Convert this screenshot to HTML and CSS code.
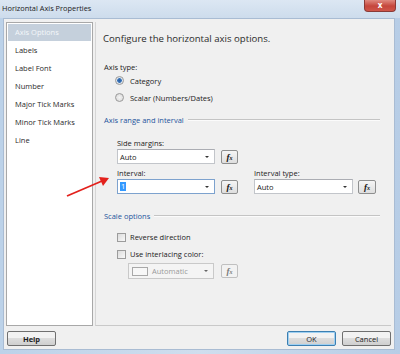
FILE: index.html
```html
<!DOCTYPE html>
<html lang="en">
  <head>
    <meta charset="UTF-8" />
    <title>Horizontal Axis Properties</title>
    <link rel="stylesheet" href="styles.css">
  </head>
  <body>
    <div class="window">
      <div class="titlebar">
        <span class="title">Horizontal Axis Properties</span>
        <span class="close">x</span>
      </div>
      <div class="content">
        <div class="main">
          <ul class="nav">
            <li class="active">Axis Options</li>
            <li>Labels</li>
            <li>Label Font</li>
            <li>Number</li>
            <li>Major Tick Marks</li>
            <li>Minor Tick Marks</li>
            <li>Line</li>
          </ul>
          <div class="panel">
            <div class="heading">Configure the horizontal axis options.</div>
            <div class="label">Axis type:</div>
            <div class="option first"><span class="radio checked"></span>Category</div>
            <div class="option"><span class="radio"></span>Scalar (Numbers/Dates)</div>

            <div class="section"><span>Axis range and interval</span></div>
            <div class="fields">
              <div class="field-label top">Side margins:</div>
              <div class="field-row">
                <div class="select"><span>Auto</span><span class="caret"></span></div>
                <span class="fx"><b>f</b><small>x</small></span>
              </div>
              <div class="pair">
                <div class="group">
                  <div class="field-label">Interval:</div>
                  <div class="field-row">
                    <div class="select focused"><span class="picked">1</span><span class="caret"></span></div>
                    <span class="fx"><b>f</b><small>x</small></span>
                  </div>
                </div>
                <div class="group second">
                  <div class="field-label">Interval type:</div>
                  <div class="field-row">
                    <div class="select wide"><span>Auto</span><span class="caret"></span></div>
                    <span class="fx"><b>f</b><small>x</small></span>
                  </div>
                </div>
              </div>
            </div>

            <div class="section scale"><span>Scale options</span></div>
            <div class="fields">
              <div class="check first"><span class="box"></span>Reverse direction</div>
              <div class="check"><span class="box"></span>Use interlacing color:</div>
              <div class="field-row picker-row">
                <div class="select picker"><span class="swatch"></span><span class="muted">Automatic</span><span class="caret"></span></div>
                <span class="fx disabled"><b>f</b><small>x</small></span>
              </div>
            </div>
          </div>
        </div>
        <div class="footer">
          <button class="btn">Help</button>
          <div class="right">
            <button class="btn default">OK</button>
            <button class="btn">Cancel</button>
          </div>
        </div>
      </div>

      <!-- red pointer drawn over the screenshot -->
      <svg class="arrow" width="400" height="354" viewBox="0 0 400 354">
        <line x1="67" y1="196" x2="102" y2="181" stroke="#e3211c" stroke-width="1.8" />
        <polygon points="109,178 99,177 103,186" fill="#e3211c" />
      </svg>
    </div>
  </body>
</html>
```

FILE: styles.css
```css
body {
  margin: 0;
  font-family: "Open Sans", "Noto Sans", sans-serif;
  font-size: 7.5px;
  color: #222;
}
.window {
  position: relative;
  width: 400px;
  height: 354px;
  box-sizing: border-box;
  padding: 0 5px 4px 3px;
  background: linear-gradient(90deg, #bcd2e9, #cfdeee 50%, #b7cde6);
  display: flex;
  flex-direction: column;
  overflow: hidden;
}
.titlebar {
  height: 18px;
  display: flex;
  align-items: flex-start;
  margin-left: -3px;
  margin-right: -5px;
  padding-left: 2px;
  background: linear-gradient(#dce7f3, #cddcec);
}
.title {
  font-size: 7.4px;
  line-height: 16px;
  color: #1c1c1c;
}
.close {
  margin-left: auto;
  margin-right: 4px;
  width: 30px;
  height: 11px;
  border: 1px solid #8a3a36;
  border-top: none;
  border-radius: 0 0 4px 4px;
  background: linear-gradient(#e08a80, #c5463c 55%, #d0564a);
  color: #fff;
  font-weight: bold;
  font-size: 8px;
  line-height: 9px;
  text-align: center;
}
.content {
  flex: 1;
  display: flex;
  flex-direction: column;
  background: #f0f0f0;
  border: 1px solid #a9bcd3;
  padding: 3px 3px 3px 2px;
}
.main {
  height: 304px;
  display: flex;
}
.nav {
  list-style: none;
  margin: 0;
  padding: 1px;
  width: 83px;
  background: #fff;
  border: 1px solid #a8a8a8;
}
.nav li {
  height: 18px;
  line-height: 18px;
  padding-left: 7px;
  color: #2a2a2a;
}
.nav li.active {
  height: 17px;
  line-height: 17px;
  background: #c5d0dc;
  color: #f4f7fa;
}
.panel {
  flex: 1;
  margin-left: 2px;
  border-left: 1px solid #d6d6d6;
  border-bottom: 1px solid #c9c9c9;
  padding: 0 11px 0 7px;
}
.heading {
  margin-top: 10px;
  height: 14px;
  line-height: 14px;
  font-size: 9.6px;
  color: #2b2b2b;
}
.label {
  margin-top: 15px;
  margin-left: 1px;
  height: 12px;
  line-height: 12px;
}
.option,
.check {
  display: flex;
  align-items: center;
  margin-top: 4px;
  height: 13px;
}
.option {
  margin-left: 12px;
}
.option.first {
  margin-top: 1px;
}
.radio {
  width: 7px;
  height: 7px;
  margin-right: 6px;
  border: 1px solid #9a9a9a;
  border-radius: 50%;
  background: radial-gradient(circle, #f4f4f4, #d6d6d6);
}
.radio.checked {
  background: radial-gradient(circle, #2a5fa5 0, #3a74b8 2px, #dde6ef 2.6px, #e4e4e4);
}
.section {
  display: flex;
  align-items: center;
  margin-top: 10px;
  margin-left: 1px;
  height: 12px;
  color: #24549c;
}
.section::after {
  content: "";
  flex: 1;
  margin-left: 4px;
  border-top: 1px solid #c4c4c4;
  border-bottom: 1px solid #fbfbfb;
}
.section.scale {
  margin-top: 16px;
}
.fields {
  margin-left: 14px;
}
.field-label {
  margin-top: 3px;
  height: 12px;
  line-height: 12px;
}
.field-label.top {
  margin-top: 11px;
}
.field-row {
  display: flex;
  align-items: center;
}
.select {
  display: flex;
  align-items: center;
  box-sizing: border-box;
  width: 98px;
  height: 15px;
  padding: 0 5px 0 2px;
  background: #fff;
  border: 1px solid #c2c5ca;
  border-top-color: #abadb3;
}
.select.wide {
  width: 99px;
}
.select.focused {
  border-color: #7da2ce;
}
.picked {
  background: #3399ff;
  color: #fff;
  padding: 0 1px;
  line-height: 9px;
}
.caret {
  margin-left: auto;
  width: 0;
  height: 0;
  border-left: 2px solid transparent;
  border-right: 2px solid transparent;
  border-top: 2.5px solid #333;
}
.fx {
  box-sizing: border-box;
  width: 17px;
  height: 14px;
  margin-left: 6px;
  border: 1px solid #8e8f8f;
  border-radius: 2px;
  background: linear-gradient(#f5f5f5, #dedede);
  font-family: "Liberation Serif", serif;
  font-style: italic;
  font-size: 9px;
  line-height: 12px;
  text-align: center;
  color: #111;
}
.fx b {
  font-weight: bold;
}
.fx small {
  font-size: 6px;
  font-weight: bold;
}
.fx.disabled {
  border-color: #c0c0c0;
  background: #f2f2f2;
  color: #7a7a7a;
}
.pair {
  display: flex;
}
.group.second {
  margin-left: 16px;
}
.group.second .fx {
  margin-left: 5px;
  width: 18px;
}
.check {
  margin-top: 5px;
  height: 12px;
}
.check.first {
  margin-top: 9px;
}
.box {
  width: 7px;
  height: 7px;
  margin-right: 4px;
  border: 1px solid #9c9c9c;
  background: linear-gradient(135deg, #dcdcdc, #f8f8f8);
}
.picker-row {
  margin-top: 3px;
  margin-left: 11px;
}
.picker {
  width: 86px;
  height: 16px;
  padding-left: 3px;
  border-color: #c9c9c9;
  background: #f4f4f4;
}
.swatch {
  width: 14px;
  height: 7px;
  margin-right: 4px;
  border: 1px solid #a8a8a8;
  background: #f7f7f7;
}
.muted {
  color: #9a9a9a;
}
.picker .caret {
  border-top-color: #666;
}
.picker-row .fx {
  margin-left: 7px;
}
.footer {
  display: flex;
  justify-content: space-between;
  padding-top: 5px;
}
.footer .right {
  display: flex;
  gap: 6px;
}
.btn {
  box-sizing: border-box;
  width: 49px;
  height: 15px;
  margin: 0;
  padding: 0;
  border: 1px solid #707070;
  border-radius: 2px;
  background: linear-gradient(#f2f2f2 45%, #dddddd 50%, #cfcfcf);
  font-family: "Open Sans", "Noto Sans", sans-serif;
  font-size: 7.5px;
  color: #1e1e1e;
}
.footer > .btn {
  margin-left: 1px;
  font-weight: bold;
}
.btn.default {
  border-color: #3c7fb1;
  box-shadow: inset 0 0 0 1px #9fd0f2;
}
.arrow {
  position: absolute;
  left: 0;
  top: 0;
}
```
